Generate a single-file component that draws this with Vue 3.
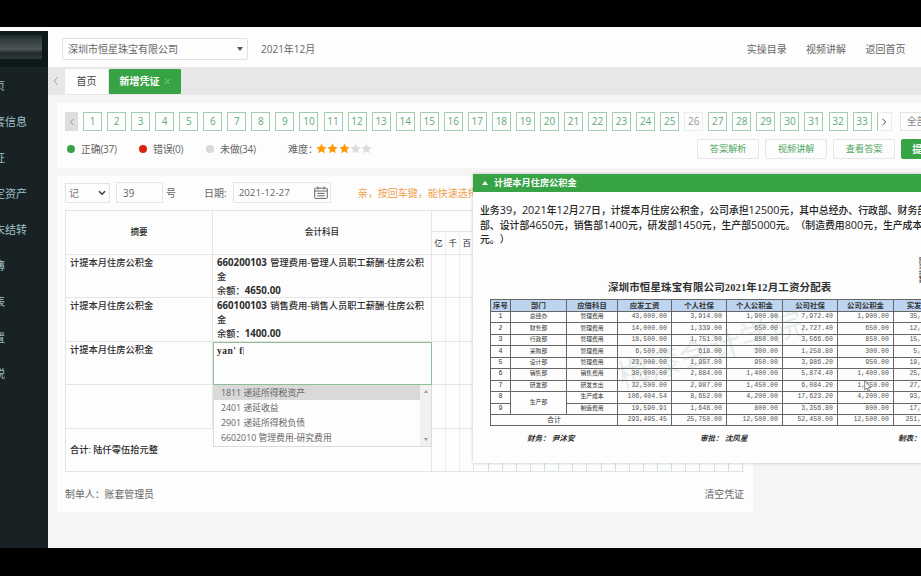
<template>
  <div class="screen">
    <!-- 侧边菜单 -->
    <aside class="sidebar">
      <div class="logo"><div class="logo-bar"></div></div>
      <ul class="menu">
        <li v-for="item in menus" :key="item">{{ item }}</li>
      </ul>
    </aside>

    <main class="main">
      <!-- 顶部栏 -->
      <header class="header">
        <div class="company">
          <span>深圳市恒星珠宝有限公司</span>
          <i class="caret"></i>
        </div>
        <span class="period">2021年12月</span>
        <nav class="links">
          <a v-for="link in links" :key="link">{{ link }}</a>
        </nav>
      </header>

      <!-- 标签页 -->
      <div class="tabs">
        <svg class="tab-prev" viewBox="0 0 6 8"><path d="M4.5 .5 1.2 4l3.3 3.5" /></svg>
        <div class="tab">首页</div>
        <div class="tab active">
          <span>新增凭证</span>
          <svg class="tab-close" viewBox="0 0 8 8"><path d="M1 1l6 6M7 1 1 7" /></svg>
        </div>
      </div>

      <!-- 题号 -->
      <section class="card progress">
        <div class="numbers">
          <span class="arrow prev"><svg viewBox="0 0 6 8"><path d="M4.5 1 1.5 4l3 3" /></svg></span>
          <span v-for="n in 33" :key="n" class="num" :class="{ undone: n === 26 }">{{ n }}</span>
          <span class="arrow next"><svg viewBox="0 0 6 8"><path d="M1.5 .8 4.7 4 1.5 7.2" /></svg></span>
          <span class="all">全部</span>
        </div>
        <div class="legend">
          <span class="mark right">正确(37)</span>
          <span class="mark wrong">错误(0)</span>
          <span class="mark todo">未做(34)</span>
          <span class="level">难度：</span>
          <span class="stars">
            <svg v-for="n in 5" :key="n" viewBox="0 0 24 24" :class="{ on: n <= 3 }">
              <path d="M12 1l3.4 7.1 7.8 1-5.7 5.4 1.4 7.8L12 18.5l-6.9 3.8 1.4-7.8L.8 9.1l7.8-1z" />
            </svg>
          </span>
          <div class="actions">
            <button v-for="act in actions" :key="act" class="btn">{{ act }}</button>
            <button class="btn submit">提交</button>
          </div>
        </div>
      </section>

      <!-- 凭证 -->
      <section class="card voucher">
        <div class="form">
          <div class="word">
            <span>记</span>
            <svg viewBox="0 0 8 6"><path d="M1 1.2l3 3 3-3" /></svg>
          </div>
          <div class="no">39</div>
          <span class="unit">号</span>
          <span class="date-label">日期:</span>
          <div class="date">
            <span>2021-12-27</span>
            <svg viewBox="0 0 14 13">
              <path d="M1.5 2.2h11a.8.8 0 0 1 .8.8v8.6a.8.8 0 0 1-.8.8h-11a.8.8 0 0 1-.8-.8V3a.8.8 0 0 1 .8-.8zM.7 5h12.6M4 .4v3M10 .4v3M3.3 7.4h7.4M3.3 9.8h7.4" />
            </svg>
          </div>
          <span class="tip">亲，按回车键，能快速选择</span>
        </div>

        <div class="sheet">
          <div class="row head">
            <div class="cell summary">摘要</div>
            <div class="cell subject">会计科目</div>
            <div class="amount">
              <div class="amount-title"></div>
              <div class="digits">
                <i v-for="n in 22" :key="n">{{ units[n - 1] }}</i>
              </div>
            </div>
          </div>
          <div v-for="(row, index) in rows" :key="index" class="row">
            <div class="cell summary">{{ row.summary }}</div>
            <div class="cell subject">
              <template v-if="row.code">
                <div><b class="code">{{ row.code }}</b>{{ row.name }}</div>
                <div>余额：<b>{{ row.balance }}</b></div>
              </template>
              <div v-if="row.editing" class="editor">
                <div class="input">yan' f<i class="ime"></i></div>
                <div class="dropdown">
                  <ul>
                    <li v-for="(opt, i) in options" :key="opt" :class="{ hover: i === 0 }">{{ opt }}</li>
                  </ul>
                  <div class="scroll"><i class="up"></i><i class="down"></i></div>
                </div>
              </div>
            </div>
            <div class="digits"><i v-for="n in 22" :key="n"></i></div>
          </div>
          <div class="row total">
            <div class="cell sum">合计: 陆仟零伍拾元整</div>
            <div class="digits"><i v-for="n in 22" :key="n"></i></div>
          </div>
        </div>

        <div class="footer">
          <span>制单人：账套管理员</span>
          <a>清空凭证</a>
        </div>
      </section>
    </main>

    <!-- 题目浮窗 -->
    <div class="popup">
      <div class="popup-title"><i></i>计提本月住房公积金</div>
      <div class="question">
        <p v-for="(line, i) in question" :key="i">
          <span v-for="(part, k) in line" :key="k" :class="{ figure: /^\d/.test(part) }">{{ part }}</span>
        </p>
      </div>
      <div class="paper">
        <h3>深圳市恒星珠宝有限公司2021年12月工资分配表</h3>
        <table>
          <colgroup>
            <col v-for="(w, i) in widths" :key="i" :style="{ width: w + 'px' }" />
          </colgroup>
          <thead>
            <tr><th v-for="h in heads" :key="h">{{ h }}</th></tr>
          </thead>
          <tbody>
            <tr v-for="(s, i) in salary" :key="i">
              <td class="c idx">{{ i + 1 }}</td>
              <td v-if="i < 8" class="c" :rowspan="i === 7 ? 2 : 1">{{ s[0] }}</td>
              <td class="c">{{ s[1] }}</td>
              <td v-for="(v, k) in s.slice(2)" :key="k" class="n">{{ v }}</td>
            </tr>
            <tr>
              <td class="c sum-label" colspan="3">合计</td>
              <td v-for="(v, k) in totals" :key="k" class="n">{{ v }}</td>
            </tr>
          </tbody>
        </table>
        <div class="signs">
          <span>财务： 尹沐安</span>
          <span>审批： 沈凤星</span>
          <span>制表：</span>
        </div>
        <div class="watermark">梅漆会计学院</div>
        <div class="side-note">附单据数</div>
      </div>
      <svg class="cursor" viewBox="0 0 9 14"><path d="M.8.8v10l2.4-2.1 1.6 3.8 1.6-.7-1.6-3.6h3z" /></svg>
    </div>
  </div>
</template>

<script setup>
const menus = ['首页', '账套信息', '凭证', '固定资产', '期末结转', '账簿', '报表', '设置', '报税']
const links = ['实操目录', '视频讲解', '返回首页']
const actions = ['答案解析', '视频讲解', '查看答案']
const units = ['亿', '千', '百']

const rows = [
  { summary: '计提本月住房公积金', code: '660200103', name: '管理费用-管理人员职工薪酬-住房公积金', balance: '4650.00' },
  { summary: '计提本月住房公积金', code: '660100103', name: '销售费用-销售人员职工薪酬-住房公积金', balance: '1400.00' },
  { summary: '计提本月住房公积金', editing: true },
  { summary: '' }
]

const options = ['1811 递延所得税资产', '2401 递延收益', '2901 递延所得税负债', '6602010 管理费用-研究费用']

// 数字单独拆开，字号比汉字略大
const question = [
  '业务39，2021年12月27日，计提本月住房公积金，公司承担12500元，其中总经办、行政部、财务部、采购',
  '部、设计部4650元，销售部1400元，研发部1450元，生产部5000元。（制造费用800元，生产成本4200',
  '元。）'
].map(line => line.match(/\d+|\D+/g))

const widths = [20, 56, 51, 54, 55, 56, 55, 56, 56]
const heads = ['序号', '部门', '应借科目', '应发工资', '个人社保', '个人公积金', '公司社保', '公司公积金', '实发工资']
const salary = [
  ['总经办', '管理费用', '43,000.00', '3,914.00', '1,900.00', '7,972.40', '1,900.00', '35,816.00'],
  ['财务部', '管理费用', '14,000.00', '1,339.00', '650.00', '2,727.40', '650.00', '12,011.00'],
  ['行政部', '管理费用', '18,500.00', '1,751.00', '850.00', '3,566.60', '850.00', '15,899.00'],
  ['采购部', '管理费用', '6,500.00', '618.00', '300.00', '1,258.80', '300.00', '5,582.00'],
  ['设计部', '管理费用', '23,000.00', '1,957.00', '950.00', '3,986.20', '950.00', '19,793.00'],
  ['销售部', '销售费用', '30,000.00', '2,884.00', '1,400.00', '5,874.40', '1,400.00', '25,316.00'],
  ['研发部', '研发支出', '32,500.00', '2,987.00', '1,450.00', '6,084.20', '1,450.00', '27,613.00'],
  ['生产部', '生产成本', '106,404.54', '8,652.00', '4,200.00', '17,623.20', '4,200.00', '93,552.54'],
  ['', '制造费用', '19,590.91', '1,648.00', '800.00', '3,356.80', '800.00', '17,142.91']
]
const totals = ['293,495.45', '25,750.00', '12,500.00', '52,450.00', '12,500.00', '251,245.45']
</script>

<style>
html,
body {
  margin: 0;
  background: #000;
  overflow: hidden;
}
</style>

<style scoped>
* {
  box-sizing: border-box;
}

.screen {
  position: relative;
  display: flex;
  width: 921px;
  height: 576px;
  border-top: 27px solid #000;
  border-bottom: 28px solid #000;
  background: #fdfdfd;
  overflow: hidden;
  font-family: 'Open Sans', 'Noto Sans CJK SC', sans-serif;
  font-size: 10px;
  line-height: 14px;
  text-spacing-trim: space-all;
  color: #666;
  white-space: nowrap;
}

svg {
  fill: none;
  stroke: currentColor;
}

ul {
  list-style: none;
  margin: 0;
  padding: 0;
}

i {
  font-style: normal;
}

/* 侧边菜单 */
.sidebar {
  flex: none;
  width: 48px;
  margin-top: 4px;
  background: #182224;
  overflow: hidden;
}

.logo {
  height: 36px;
  padding: 4px 6px 0 0;
  background: #0e191a;
}

.logo-bar {
  height: 24px;
  background: linear-gradient(#1e2829, #3d4748 35%, #4d5556 60%, #202a2b 75%, #303a3b);
}

.menu {
  margin-left: -17px;
}

.menu li {
  height: 36px;
  line-height: 37px;
  font-size: 11px;
  color: #9fc0cc;
}

.main {
  flex: none;
  width: 900px;
  background: #f5f5f5;
}

/* 顶部栏 */
.header {
  display: flex;
  align-items: center;
  height: 40px;
  padding: 4px 0 0 14px;
  background: #fdfdfd;
}

.company {
  display: flex;
  align-items: center;
  justify-content: space-between;
  width: 186px;
  height: 22px;
  padding: 0 4px 0 5px;
  border: 1px solid #e2e2e2;
  border-radius: 2px;
}

.caret {
  border: 3px solid transparent;
  border-top: 4px solid #555;
  border-bottom: 0;
}

.period {
  margin-left: 13px;
}

.links {
  display: flex;
  gap: 19.3px;
  margin-left: 431.5px;
}

/* 标签页 */
.tabs {
  display: flex;
  align-items: center;
  height: 28px;
  background: #e7e7e7;
}

.tab-prev {
  width: 6px;
  height: 8px;
  margin: 0 6px 0 5px;
  color: #999;
}

.tab {
  display: flex;
  align-items: center;
  justify-content: center;
  width: 43px;
  height: 25px;
  background: #fdfdfd;
  color: #444;
}

.tab.active {
  gap: 4px;
  width: 72px;
  margin-left: 1px;
  border-radius: 1px;
  background: #38a345;
  color: #fff;
  font-weight: 700;
}

.tab-close {
  width: 7px;
  height: 7px;
  color: #8fd096;
}

.card {
  margin-left: 9px;
  background: #fdfdfd;
}

/* 题号 */
.progress {
  height: 65px;
  margin-top: 8px;
  padding: 9px 0 0 8px;
}

.numbers {
  display: flex;
  gap: 5.06px;
  height: 19px;
}

.num,
.arrow,
.all {
  display: flex;
  flex: none;
  align-items: center;
  justify-content: center;
  width: 19px;
  border: 1px solid #a3cdaf;
  color: #62aa78;
  line-height: 13px;
}

.num.undone {
  border-color: #ececec;
  color: #999;
}

.arrow svg {
  width: 6px;
  height: 8px;
}

.arrow.prev {
  width: 13px;
  border: none;
  background: #dedede;
  color: #999;
}

.arrow.next {
  width: 15px;
  border-color: #ececec;
  border-left-color: #9ccdaa;
  color: #444;
}

.all {
  width: 34px;
  margin-left: 3px;
  border-color: #e4e4e4;
  color: #888;
}

.legend {
  display: flex;
  align-items: center;
  height: 21px;
  margin-top: 7px;
}

.mark {
  display: flex;
  align-items: center;
  width: 72px;
  padding-left: 2px;
}

.mark::before {
  content: '';
  width: 8px;
  height: 8px;
  margin-right: 6px;
  border-radius: 50%;
  background: #38a345;
}

.mark.right {
  letter-spacing: -0.3px;
}

.mark.wrong {
  width: 67px;
  letter-spacing: -0.3px;
}

.mark.wrong::before {
  background: #d9240f;
}

.mark.todo {
  width: 84px;
  letter-spacing: -0.3px;
}

.mark.todo::before {
  background: #d8d8d8;
}

.level {
  width: 28px;
}

.stars {
  display: flex;
  gap: 0.3px;
}

.stars svg {
  width: 11px;
  height: 11px;
  fill: #dcdcdc;
  stroke: none;
}

.stars svg.on {
  fill: #ff9a0a;
}

.actions {
  display: flex;
  gap: 6px;
  margin-left: 325px;
}

.btn {
  flex: none;
  width: 62px;
  height: 20px;
  padding: 0;
  border: 1px solid #e6e6e6;
  border-radius: 2px;
  background: #fdfdfd;
  color: #4fa55c;
  font: inherit;
  font-size: 9.2px;
}

.btn.submit {
  width: 42px;
  border-color: #38a345;
  background: #38a345;
  color: #fff;
  font-weight: 700;
  font-size: 10px;
}

/* 凭证 */
.voucher {
  width: 696px;
  height: 336px;
  margin-top: 8px;
  padding: 6px 9px 0 8px;
}

.form {
  display: flex;
  align-items: center;
  height: 21px;
}

.word,
.no,
.date {
  display: flex;
  align-items: center;
  justify-content: space-between;
  height: 21px;
  border: 1px solid #e4e4e4;
}

.word {
  width: 45px;
  height: 20px;
  padding: 0 3px;
  color: #777;
}

.word svg {
  width: 8px;
  height: 6px;
  color: #333;
  stroke-width: 1.4;
}

.no {
  width: 47px;
  margin-left: 6px;
  padding-left: 6px;
}

.unit {
  margin-left: 3px;
}

.date-label {
  margin-left: 28px;
}

.date {
  width: 98px;
  margin-left: 6px;
  padding: 0 2px 0 5px;
  font-size: 9.8px;
}

.date svg {
  width: 14px;
  height: 13px;
  stroke-width: 1;
}

.tip {
  width: 115px;
  margin-left: 27px;
  overflow: hidden;
  color: #ef9f4e;
}

.sheet {
  width: 679px;
  margin-top: 7px;
  border-top: 1px solid #dfe5e3;
  border-left: 1px solid #dfe5e3;
  color: #2c2c2c;
  font-size: 9.25px;
  font-weight: 500;
}

.row {
  display: flex;
  height: 43.5px;
  border-bottom: 1px solid #e2e6e5;
}

.cell {
  flex: none;
  border-right: 1px solid #e2e6e5;
}

.summary {
  width: 147px;
  padding: 1px 4px;
}

.subject {
  position: relative;
  width: 219px;
  padding: 1px 4px;
  white-space: normal;
}

.subject b {
  font-size: 9.7px;
  font-weight: 700;
  line-height: 1;
}

.subject .code {
  margin-right: 3.3px;
}

.head .cell {
  display: flex;
  align-items: center;
  justify-content: center;
  font-size: 8.6px;
}

.amount-title {
  height: 21px;
  border-bottom: 1px solid #e2e6e5;
}

.amount .digits {
  height: 22px;
}

.digits {
  display: flex;
}

.digits i {
  width: 14.14px;
  border-right: 1px solid #ecefef;
  text-align: center;
  line-height: 22px;
  font-size: 8.5px;
  font-weight: 400;
}

.digits i:nth-child(3n) {
  border-right-color: #dbe8ea;
}

.total .digits i:nth-child(n + 4) {
  border-right-color: #cfe2e0;
}

.sum {
  width: 366px;
  padding-left: 4px;
  line-height: 41px;
}

/* 科目输入与联想 */
.editor {
  position: absolute;
  top: 0;
  left: 0;
  z-index: 2;
  width: 219px;
}

.input {
  height: 43px;
  padding: 1px 3px;
  border: 1px solid #8fbd98;
  background: #fdfdfd;
  font: 700 9.5px/14px 'Liberation Serif', serif;
  letter-spacing: 0.5px;
}

.ime {
  display: inline-block;
  height: 8px;
  border-right: 1px solid #aaa;
  vertical-align: -1px;
}

.dropdown {
  display: flex;
  height: 62px;
  border: 1px solid #dcdcdc;
  border-top: none;
  background: #fdfdfd;
}

.dropdown ul {
  flex: 1;
}

.dropdown li {
  height: 15.2px;
  padding-left: 7px;
  line-height: 17px;
  color: #666;
  font-size: 8.8px;
  font-weight: 400;
}

.dropdown li.hover {
  background: #d9d9d9;
}

.scroll {
  display: flex;
  flex-direction: column;
  align-items: center;
  justify-content: space-between;
  width: 11px;
  padding: 5px 0;
  background: #f0f0f0;
}

.up,
.down {
  border: 2.5px solid transparent;
}

.up {
  border-top: 0;
  border-bottom: 3px solid #999;
}

.down {
  border-bottom: 0;
  border-top: 3px solid #999;
}

.footer {
  display: flex;
  justify-content: space-between;
  padding: 14.5px 0 0;
  font-size: 9.9px;
}

/* 题目浮窗 */
.popup {
  position: absolute;
  top: 147px;
  left: 473px;
  width: 448px;
  height: 289px;
  background: #fdfdfd;
  box-shadow: 0 0 3px rgba(0, 0, 0, 0.25);
  overflow: hidden;
}

.popup-title {
  display: flex;
  align-items: center;
  gap: 6px;
  height: 18px;
  padding-left: 9px;
  background: #38a345;
  color: #fff;
  font-size: 9.2px;
  font-weight: 700;
}

.popup-title i {
  border: 3px solid transparent;
  border-top: 0;
  border-bottom: 4px solid #fff;
}

.question {
  height: 88px;
  padding: 11px 0 0 7px;
  color: #222;
  font-size: 9.85px;
  font-weight: 500;
}

.question p {
  height: 14.5px;
  margin: 0;
  line-height: 14.5px;
}

.question .figure {
  font-size: 10.8px;
  line-height: 1;
}

.paper {
  position: relative;
  width: 480px;
  padding-left: 17px;
  color: #333;
}

.paper h3 {
  margin: 0 0 3px;
  padding-left: 118px;
  font: 600 10.5px/16px 'Liberation Serif', 'Noto Sans CJK SC', serif;
  letter-spacing: 0.12px;
}

table {
  width: 459px;
  table-layout: fixed;
  border-collapse: collapse;
  border: 1.5px solid #333;
  font-family: 'Liberation Mono', 'Noto Sans CJK SC', monospace;
  font-size: 6.6px;
  line-height: 8px;
}

th,
td {
  height: 11.45px;
  padding: 0;
  border: 1px solid #666;
}

th {
  height: 12px;
  background: #bdd4f0;
  font-size: 7.4px;
  font-weight: 600;
}

.c {
  text-align: center;
  font-size: 5.8px;
}

.idx {
  font-size: 6.6px;
}

.sum-label {
  font-size: 7px;
}

.n {
  padding-right: 4px;
  text-align: right;
  color: #555;
}

.signs {
  display: flex;
  padding: 5px 0 0 37px;
  font-size: 7.6px;
  font-weight: 700;
  font-style: italic;
}

.signs span:first-child {
  width: 173px;
}

.signs span:nth-child(2) {
  width: 198px;
}

.watermark {
  position: absolute;
  top: 49px;
  left: 141px;
  color: rgba(110, 150, 120, 0.17);
  font-size: 32px;
  line-height: 40px;
  transform: rotate(-17deg);
}

.side-note {
  position: absolute;
  top: -23px;
  left: 445px;
  writing-mode: vertical-rl;
  font-size: 6.5px;
  line-height: 7px;
}

.cursor {
  position: absolute;
  top: 206px;
  left: 391px;
  width: 8px;
  height: 13px;
  fill: #fff;
  stroke: #555;
  stroke-width: 0.8;
}
</style>
